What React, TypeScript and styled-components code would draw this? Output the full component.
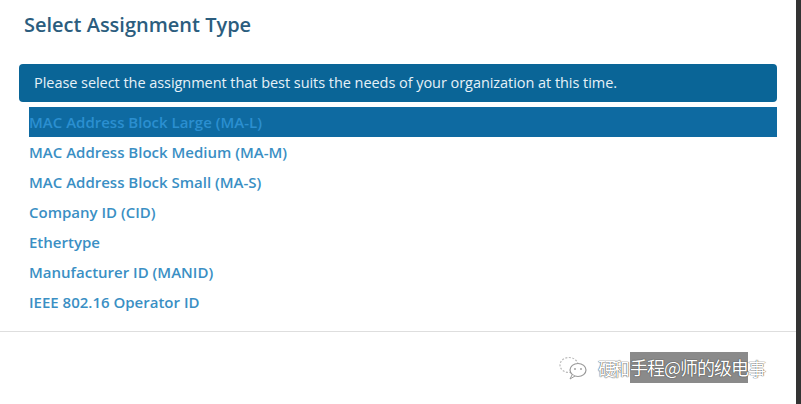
import { useState } from 'react';
import styled, { createGlobalStyle } from 'styled-components';

const GlobalStyle = createGlobalStyle`
	html, body {
		margin: 0;
		padding: 0;
		background: #fff;
	}
	body {
		font-family: 'Open Sans', 'Noto Sans', sans-serif;
	}
`;

const types = [
	'MAC Address Block Large (MA-L)',
	'MAC Address Block Medium (MA-M)',
	'MAC Address Block Small (MA-S)',
	'Company ID (CID)',
	'Ethertype',
	'Manufacturer ID (MANID)',
	'IEEE 802.16 Operator ID',
];

export const App = () => {
	const [selected, setSelected] = useState(0);

	return (
		<>
			<GlobalStyle />
			<Frame>
				<Modal>
					<Header>
						<h2>Select Assignment Type</h2>
					</Header>
					<Body>
						<Notice>
							Please select the assignment that best suits the needs of your
							organization at this time.
						</Notice>
						<List>
							{types.map((t, i) => (
								<Item
									key={t}
									$active={i === selected}
									onClick={() => setSelected(i)}
								>
									{t}
								</Item>
							))}
						</List>
					</Body>
					<Footer />
				</Modal>
				<Watermark>
					<WechatIcon />
					<Squeezed>硬和</Squeezed>
					<Tag>手程@师的级电</Tag>
					<span>事</span>
				</Watermark>
			</Frame>
		</>
	);
};

export default App;

const WechatIcon = () => (
	<svg width="32" height="26" viewBox="0 0 32 26" fill="none">
		<ellipse cx="11" cy="10" rx="9" ry="7.5" stroke="#bbb" strokeWidth="1.2" strokeDasharray="2 1.5" />
		<ellipse cx="20" cy="15" rx="8" ry="6.5" fill="#fff" stroke="#999" strokeWidth="1.2" />
		<circle cx="17" cy="14" r="0.9" fill="#999" />
		<circle cx="23" cy="14" r="0.9" fill="#999" />
		<path d="M14 20 L12 24 L17 21" stroke="#999" strokeWidth="1" fill="#fff" />
	</svg>
);

const Frame = styled.div`
	position: relative;
	display: flex;
	width: 801px;
	height: 404px;
	overflow: hidden;
`;

const Modal = styled.div`
	flex: 1;
	display: flex;
	flex-direction: column;
	border-right: 5px solid #333;
`;

const Header = styled.div`
	padding: 11px 24px 0;
	height: 53px;
	box-sizing: border-box;

	h2 {
		margin: 0;
		font-size: 20px;
		font-weight: 600;
		line-height: 28px;
		color: #2b5d7e;
	}
`;

const Body = styled.div`
	display: flex;
	flex-direction: column;
	padding: 11px 19px 0 19px;
	height: 279px;
	box-sizing: border-box;
	border-bottom: 1px solid #dedede;
`;

const Notice = styled.div`
	background: #0a6597;
	color: #e6f1f8;
	border-radius: 4px;
	height: 38px;
	display: flex;
	align-items: center;
	padding: 0 15px;
	font-size: 14.5px;
	letter-spacing: -0.05px;
	line-height: 20px;
`;

const List = styled.div`
	display: flex;
	flex-direction: column;
	padding: 5px 0 0 10px;
`;

const Item = styled.div<{ $active: boolean }>`
	height: 30px;
	display: flex;
	align-items: center;
	font-size: 15px;
	font-weight: 600;
	cursor: pointer;
	color: ${({ $active }) => ($active ? '#2b8fd0' : '#3a8fc4')};
	background: ${({ $active }) => ($active ? '#0e6aa1' : 'transparent')};
`;

const Footer = styled.div`
	flex: 1;
`;

const Watermark = styled.div`
	position: absolute;
	left: 558px;
	top: 352px;
	display: flex;
	align-items: center;
	font-family: 'Noto Sans CJK SC', sans-serif;
	font-size: 18px;
	color: #fff;
	text-shadow: 0 0 1px #444, 0 0 1px #444;

	svg {
		margin-right: 8px;
	}
`;

const Squeezed = styled.span`
	letter-spacing: -4px;
	padding-right: 4px;
`;

const Tag = styled.span`
	background: #8a8a8a;
	padding: 2px 0;
	line-height: 27px;
	letter-spacing: -1px;
`;
